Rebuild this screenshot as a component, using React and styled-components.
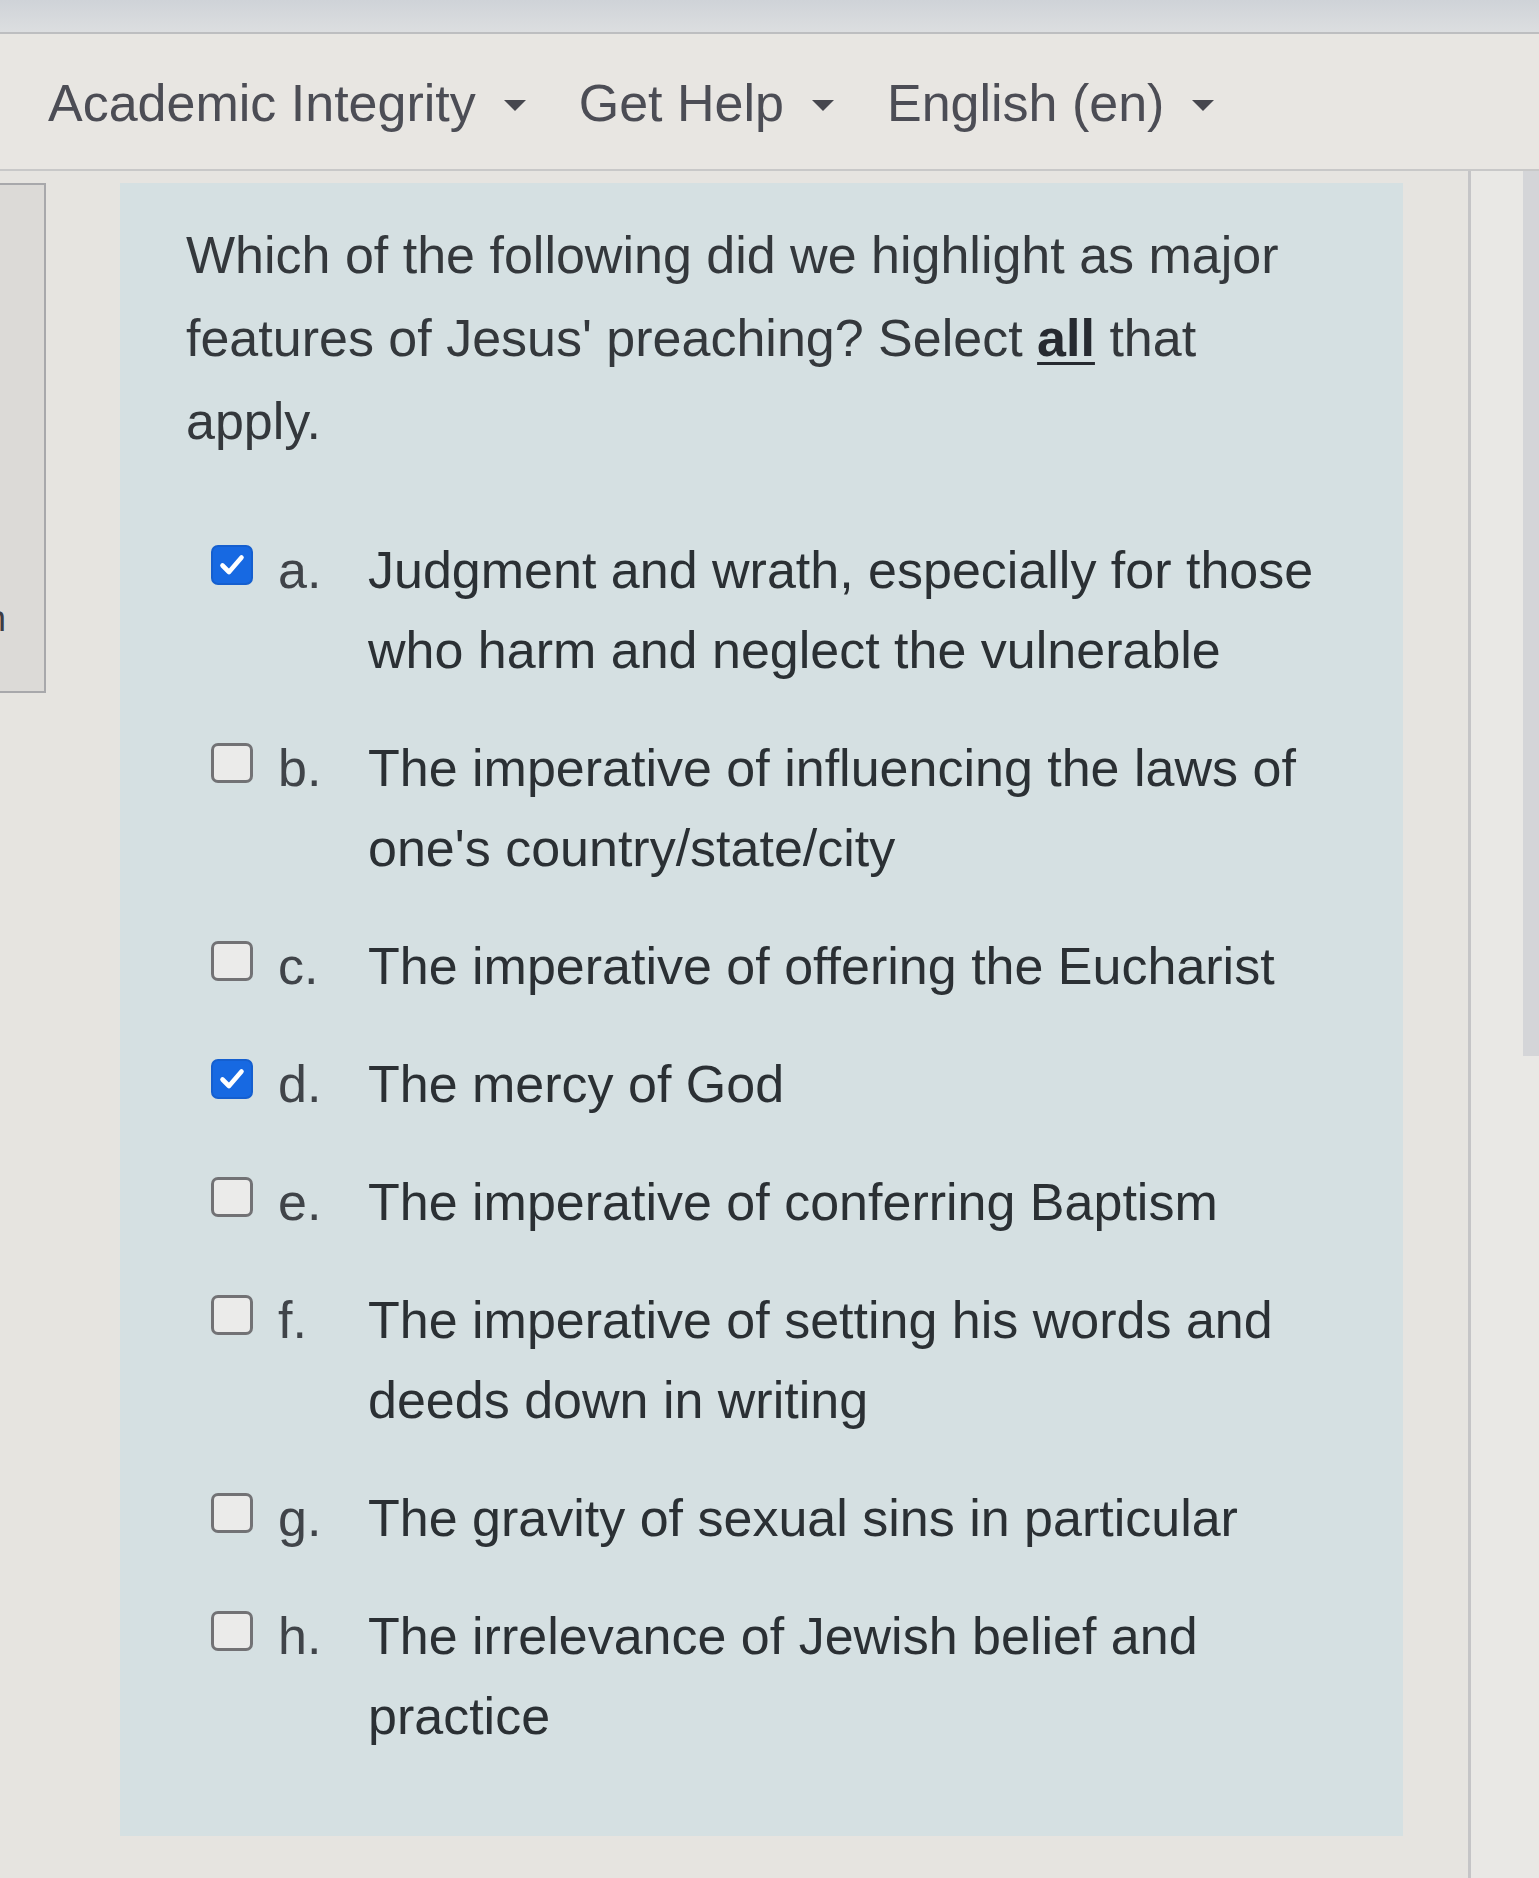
import React from "react";
import styled, { createGlobalStyle } from "styled-components";

const GlobalStyle = createGlobalStyle`
  html, body { margin: 0; padding: 0; }
  body {
    background: #e6e4e0;
    font-family: "Liberation Sans", Arial, Helvetica, sans-serif;
  }
`;

const Page = styled.div`
  min-height: 1878px;
  display: flex;
  flex-direction: column;
  background: #e6e4e0;
  overflow: hidden;
`;

const TopStrip = styled.div`
  height: 32px;
  background: linear-gradient(#cfd3d8, #dcdee0);
  border-bottom: 2px solid #bdbec0;
`;

const NavBar = styled.nav`
  height: 137px;
  box-sizing: border-box;
  display: flex;
  align-items: flex-start;
  gap: 53px;
  padding: 39px 0 0 48px;
  border-bottom: 2px solid #c8c8c8;
  background: #e8e6e2;
`;

const NavItem = styled.div`
  display: flex;
  align-items: center;
  gap: 28px;
  font-size: 52px;
  line-height: 60px;
  color: #4c4d55;
  white-space: nowrap;
`;

const Caret = styled.span`
  width: 0;
  height: 0;
  margin-top: 4px;
  border-left: 11px solid transparent;
  border-right: 11px solid transparent;
  border-top: 11px solid #46474e;
`;

const Body = styled.div`
  flex: 1;
  display: flex;
  align-items: flex-start;
`;

const Drawer = styled.aside`
  width: 46px;
  height: 510px;
  margin-top: 12px;
  background: #dcdad7;
  border: 2px solid #a8a8ab;
  border-left: none;
  overflow: hidden;
  flex-shrink: 0;
  display: flex;
  flex-direction: column;
  justify-content: flex-end;
  padding-bottom: 52px;
  box-sizing: border-box;
`;

const DrawerText = styled.span`
  display: block;
  margin-left: -14px;
  font-size: 36px;
  line-height: 40px;
  color: #3c3c44;
  white-space: nowrap;
`;

const Panel = styled.section`
  width: 1283px;
  box-sizing: border-box;
  margin: 12px 0 0 74px;
  padding: 31px 71px 80px 66px;
  background: #d5e0e2;
  flex-shrink: 0;
`;

const Question = styled.p`
  margin: 0;
  font-size: 52px;
  line-height: 83px;
  color: #34383c;
`;

const Strong = styled.strong`
  font-weight: 700;
  text-decoration: underline;
  text-underline-offset: 6px;
  text-decoration-thickness: 3px;
  color: #262a30;
`;

const Options = styled.div`
  margin-top: 67px;
  display: flex;
  flex-direction: column;
  gap: 38px;
`;

const Row = styled.label`
  display: flex;
  align-items: flex-start;
  padding-left: 25px;
`;

const Box = styled.span`
  width: 42px;
  height: 40px;
  margin-top: 15px;
  flex-shrink: 0;
  box-sizing: border-box;
  border-radius: 7px;
  display: flex;
  align-items: center;
  justify-content: center;
  background: ${(p) => (p.$checked ? "#1769e2" : "#ebebea")};
  border: ${(p) => (p.$checked ? "2px solid #155fcf" : "3px solid #727275")};
`;

const Letter = styled.span`
  width: 90px;
  margin-left: 25px;
  flex-shrink: 0;
  font-size: 52px;
  line-height: 80px;
  color: #404449;
`;

const OptionText = styled.span`
  flex: 1;
  font-size: 52px;
  line-height: 80px;
  color: #2b3034;
`;

const RightRail = styled.div`
  align-self: stretch;
  margin-left: 65px;
  flex: 1;
  display: flex;
  justify-content: flex-end;
  border-left: 3px solid #c5c5c7;
  background: #e9e8e5;
`;

const ScrollThumb = styled.div`
  width: 16px;
  height: 885px;
  background: #d4d5d8;
`;

const Check = () => (
  <svg width="32" height="32" viewBox="0 0 32 32" aria-hidden="true">
    <path
      d="M6.5 16.5 L13 23 L25.5 8.5"
      fill="none"
      stroke="#ffffff"
      strokeWidth="4.6"
      strokeLinecap="round"
      strokeLinejoin="round"
    />
  </svg>
);

const options = [
  { key: "a", text: "Judgment and wrath, especially for those who harm and neglect the vulnerable", checked: true },
  { key: "b", text: "The imperative of influencing the laws of one's country/state/city", checked: false },
  { key: "c", text: "The imperative of offering the Eucharist", checked: false },
  { key: "d", text: "The mercy of God", checked: true },
  { key: "e", text: "The imperative of conferring Baptism", checked: false },
  { key: "f", text: "The imperative of setting his words and deeds down in writing", checked: false },
  { key: "g", text: "The gravity of sexual sins in particular", checked: false },
  { key: "h", text: "The irrelevance of Jewish belief and practice", checked: false },
];

const navItems = ["Academic Integrity", "Get Help", "English (en)"];

export default function App() {
  return (
    <>
      <GlobalStyle />
      <Page>
        <TopStrip />
        <NavBar>
          {navItems.map((n) => (
            <NavItem key={n}>
              {n}
              <Caret />
            </NavItem>
          ))}
        </NavBar>
        <Body>
          <Drawer>
            <DrawerText>n</DrawerText>
          </Drawer>
          <Panel>
            <Question>
              Which of the following did we highlight as major features of Jesus' preaching? Select{" "}
              <Strong>all</Strong> that apply.
            </Question>
            <Options>
              {options.map((o) => (
                <Row key={o.key}>
                  <Box $checked={o.checked}>{o.checked && <Check />}</Box>
                  <Letter>{o.key}.</Letter>
                  <OptionText>{o.text}</OptionText>
                </Row>
              ))}
            </Options>
          </Panel>
          <RightRail>
            <ScrollThumb />
          </RightRail>
        </Body>
      </Page>
    </>
  );
}
